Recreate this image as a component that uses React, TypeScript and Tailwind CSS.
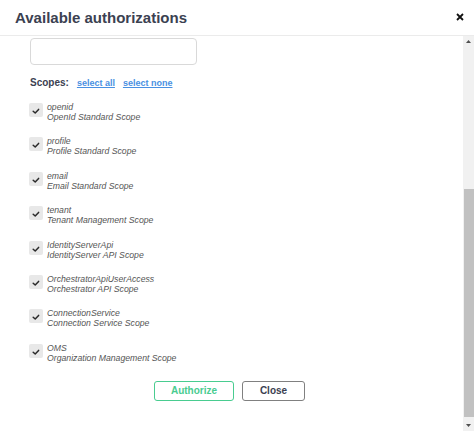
import React from 'react';

interface Scope {
  name: string;
  description: string;
}

const scopes: Scope[] = [
  { name: 'openid', description: 'OpenId Standard Scope' },
  { name: 'profile', description: 'Profile Standard Scope' },
  { name: 'email', description: 'Email Standard Scope' },
  { name: 'tenant', description: 'Tenant Management Scope' },
  { name: 'IdentityServerApi', description: 'IdentityServer API Scope' },
  { name: 'OrchestratorApiUserAccess', description: 'Orchestrator API Scope' },
  { name: 'ConnectionService', description: 'Connection Service Scope' },
  { name: 'OMS', description: 'Organization Management Scope' },
];

const CheckBox = () => (
  <div className="w-[14px] h-[14px] shrink-0 rounded-[2px] bg-[#e8e8e8] mt-[1px]">
    <svg width="14" height="14" viewBox="0 0 14 14" fill="none">
      <path d="M4.2 8.2 L6.2 10 L9.6 6.4" stroke="#2b2b2b" strokeWidth="1.5" strokeLinecap="round" strokeLinejoin="round" />
    </svg>
  </div>
);

const ScrollBar = () => (
  <div className="w-[11px] shrink-0 bg-[#f1f1f1] flex flex-col">
    <div className="h-[11px] flex items-center justify-center">
      <svg width="5" height="3" viewBox="0 0 5 3">
        <path d="M0 3 L2.5 0 L5 3 Z" fill="#505050" />
      </svg>
    </div>
    <div className="h-[142px]" />
    <div className="h-[228px] ml-px bg-[#c1c1c1]" />
    <div className="flex-1" />
    <div className="h-[11px] flex items-center justify-center">
      <svg width="5" height="3" viewBox="0 0 5 3">
        <path d="M0 0 L5 0 L2.5 3 Z" fill="#505050" />
      </svg>
    </div>
  </div>
);

export default function App() {
  return (
    <div className="w-[474px] h-[431px] bg-white flex flex-col overflow-hidden font-['Liberation_Sans',Arial,sans-serif] text-[#3b4151]">
      <div className="h-[36px] shrink-0 border-b border-[#ebebeb] flex items-center justify-between pl-[15px] pr-[10px]">
        <h2 className="text-[15px] font-bold leading-none pb-px">Available authorizations</h2>
        <svg width="8" height="8" viewBox="0 0 8 8" className="mb-px">
          <path d="M1 1 L7 7 M7 1 L1 7" stroke="#111" strokeWidth="1.8" />
        </svg>
      </div>

      <div className="flex flex-1 min-h-0">
        <div className="flex-1 overflow-hidden pl-[30px] pt-[2px]">
          <div className="w-[167px] h-[27px] border border-[#d9d9d9] rounded-[4px] bg-white" />

          <div className="flex items-baseline mt-[12px] h-[12px]">
            <span className="text-[10px] font-bold leading-[12px]">Scopes:</span>
            <a className="ml-[8px] text-[9px] font-bold text-[#4990e2] underline leading-[12px]">select all</a>
            <a className="ml-[8px] text-[9px] font-bold text-[#4990e2] underline leading-[12px]">select none</a>
          </div>

          <div className="flex flex-col gap-[14.4px] mt-[13px] -ml-px">
            {scopes.map((scope) => (
              <label key={scope.name} className="flex gap-[4px]">
                <CheckBox />
                <div className="italic text-[8.7px] leading-[10px] text-[#555]">
                  <div>{scope.name}</div>
                  <div>{scope.description}</div>
                </div>
              </label>
            ))}
          </div>

          <div className="-ml-[30px] pr-[4px] mt-[18px] flex justify-center gap-[8px]">
            <button className="w-[80px] h-[20px] border-[1.5px] border-[#49cc90] rounded-[3px] text-[10px] font-bold text-[#49cc90]">
              Authorize
            </button>
            <button className="w-[63px] h-[20px] border-[1.5px] border-[#808080] rounded-[3px] text-[10px] font-bold text-[#3b4151]">
              Close
            </button>
          </div>
        </div>
        <ScrollBar />
      </div>
    </div>
  );
}
